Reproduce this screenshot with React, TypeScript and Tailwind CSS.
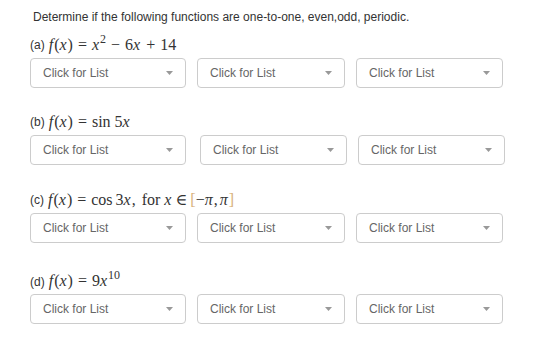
import React from "react";

const serif = { fontFamily: '"Liberation Serif", "DejaVu Serif", serif' };

const Select = ({ w }: { w: string }) => (
  <div
    className={`${w} h-[30px] shrink-0 flex items-center justify-between pl-[12px] pr-[12px] border border-[#cccccc] rounded-[4px] bg-white`}
  >
    <span className="text-[12px] text-[#666666]">Click for List</span>
    <svg width="7" height="4" viewBox="0 0 7 4">
      <polygon points="0,0 7,0 3.5,4" fill="#999999" />
    </svg>
  </div>
);

const Row = ({ b }: { b?: boolean }) =>
  b ? (
    <div className="flex mt-[3px]">
      <Select w="w-[156px]" />
      <div className="w-[14px]" />
      <Select w="w-[147px]" />
      <div className="w-[11px]" />
      <Select w="w-[147px]" />
    </div>
  ) : (
    <div className="flex mt-[3px] gap-[11px]">
      <Select w="w-[156px]" />
      <Select w="w-[148px]" />
      <Select w="w-[147px]" />
    </div>
  );

const I = ({ children }: { children: React.ReactNode }) => <i className="mr-[1px]">{children}</i>;
const Op = ({ children }: { children: React.ReactNode }) => (
  <span className="mx-[5px]">{children}</span>
);
const Fx = () => (
  <>
    <I>f</I>(<I>x</I>)<Op>=</Op>
  </>
);

export default function App() {
  return (
    <div
      className="bg-white w-[557px] h-[347px] pl-[30px] pt-[9px] text-[#333333]"
      style={{ fontFamily: '"Liberation Sans", Arial, sans-serif' }}
    >
      <div className="ml-[3px] text-[12px] leading-[16px]">
        Determine if the following functions are one-to-one, even,odd, periodic.
      </div>

      <div className="mt-[10px] h-[20px] flex items-center text-[12px]">
        <span>(a)</span>
        <span className="ml-[4px] text-[16px] leading-[20px] whitespace-nowrap" style={serif}>
          <Fx />
          <I>x</I>
          <sup className="text-[12px] relative top-[-7px]">2</sup>
          <Op>−</Op>6<I>x</I>
          <Op>+</Op>14
        </span>
      </div>
      <Row />

      <div className="mt-[24px] h-[20px] flex items-center text-[12px]">
        <span>(b)</span>
        <span className="ml-[4px] text-[16px] leading-[20px] whitespace-nowrap" style={serif}>
          <Fx />
          sin<span className="ml-[4px]">5</span>
          <I>x</I>
        </span>
      </div>
      <Row b />

      <div className="mt-[25px] h-[20px] flex items-center text-[12px]">
        <span>(c)</span>
        <span className="ml-[4px] text-[16px] leading-[20px] whitespace-nowrap" style={serif}>
          <Fx />
          cos<span className="ml-[3px]">3</span>
          <I>x</I>,<span className="ml-[6px]">for</span>
          <span className="ml-[4px]">
            <I>x</I>
          </span>
          <span className="mx-[3px]">∈</span>
          <span className="text-[#d8b27c]">[</span>−<I>π</I>,<span className="ml-[2px]"><I>π</I></span>
          <span className="text-[#d8b27c]">]</span>
        </span>
      </div>
      <Row />

      <div className="mt-[24px] h-[24px] flex items-end pb-[1px] text-[12px]">
        <span className="leading-[16px]">(d)</span>
        <span className="ml-[4px] text-[16px] leading-[18px] whitespace-nowrap" style={serif}>
          <Fx />9<I>x</I>
          <sup className="text-[12px] relative top-[-7px]">10</sup>
        </span>
      </div>
      <Row />
    </div>
  );
}
